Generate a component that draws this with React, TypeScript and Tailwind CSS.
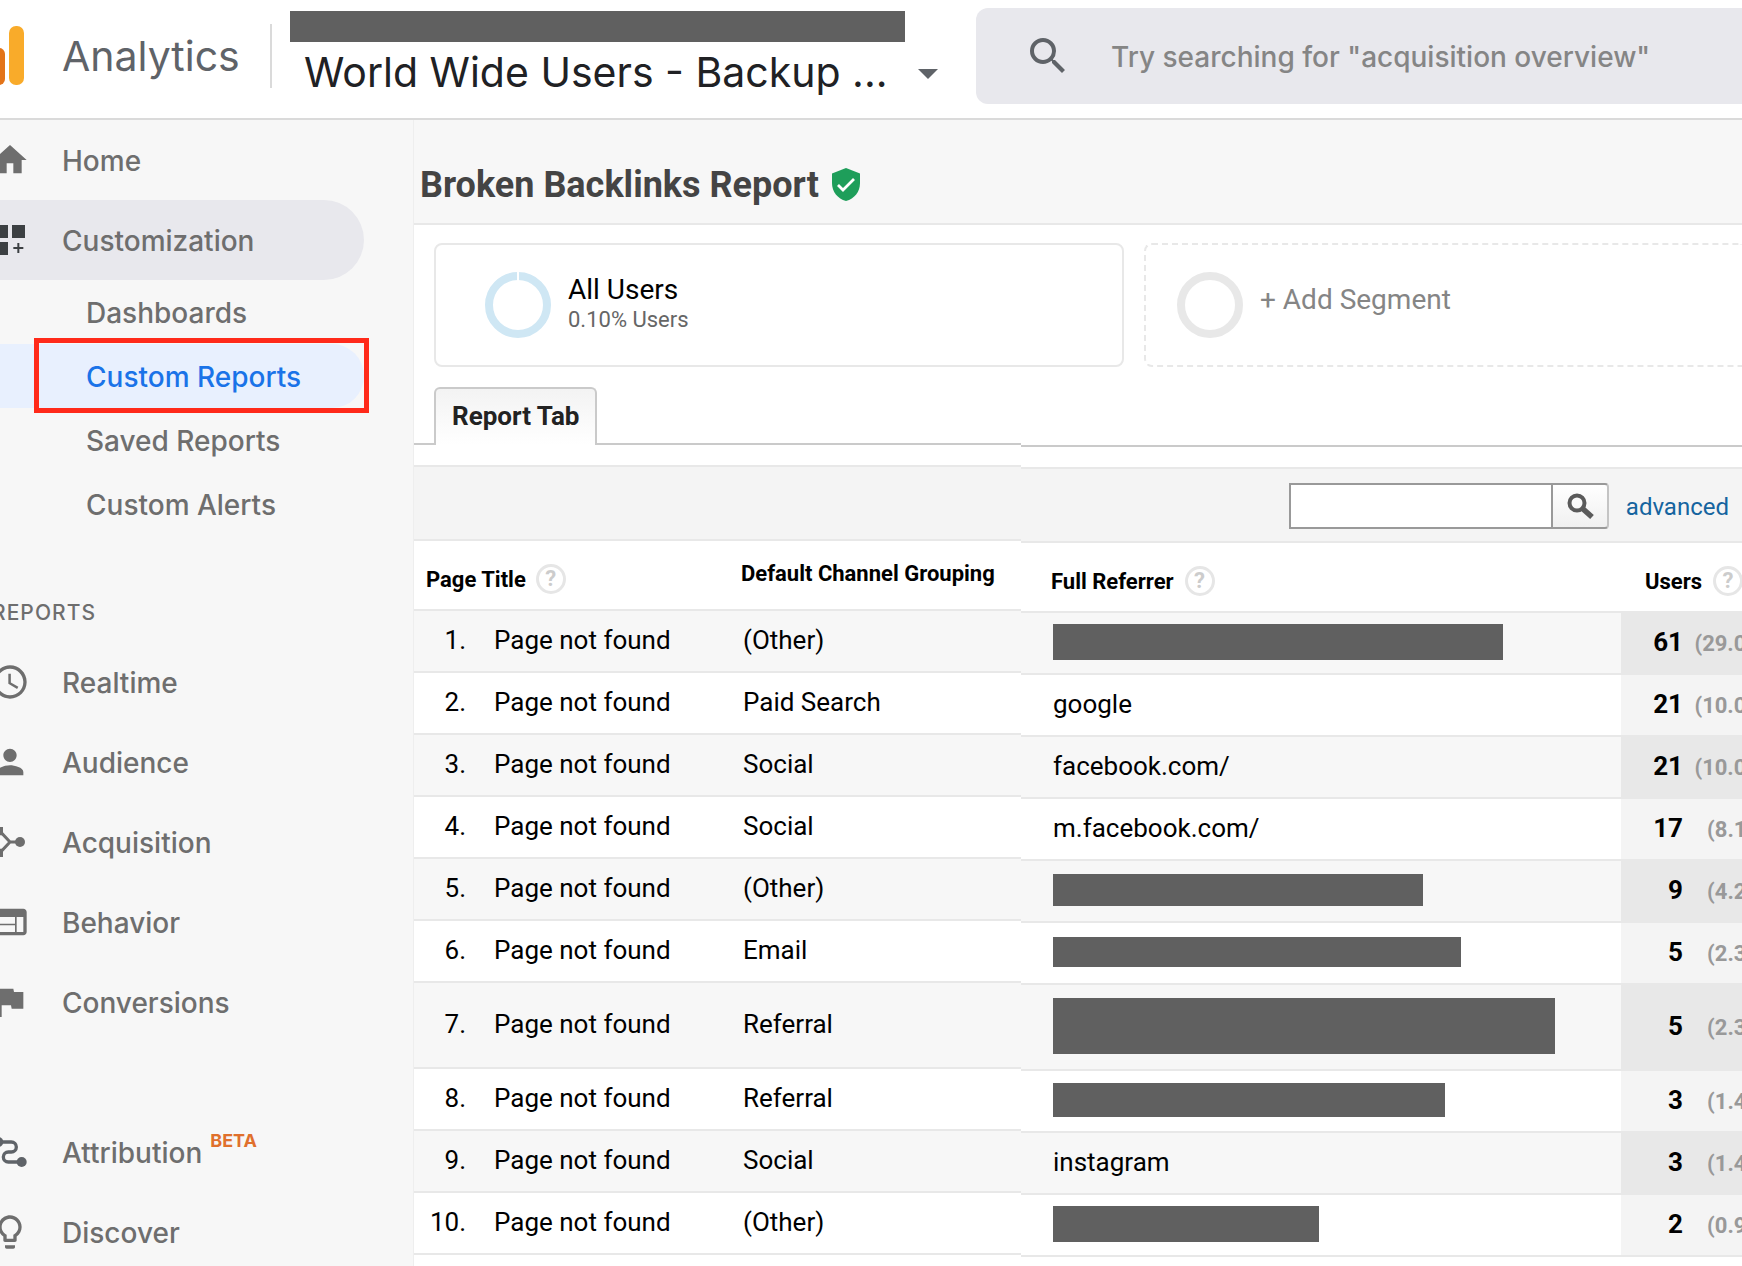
import type { ReactNode } from 'react'
import { MdFlag, MdHome, MdLightbulbOutline, MdPerson, MdSchedule, MdSearch, MdWeb } from 'react-icons/md'

type Row = {
  title: string
  channel: string
  referrer?: string
  mask?: string
  users: number
  share: string
  tall?: boolean
}

const rows: Row[] = [
  { title: 'Page not found', channel: '(Other)', mask: 'w-[450px] h-9', users: 61, share: '(29.05%)' },
  { title: 'Page not found', channel: 'Paid Search', referrer: 'google', users: 21, share: '(10.00%)' },
  { title: 'Page not found', channel: 'Social', referrer: 'facebook.com/', users: 21, share: '(10.00%)' },
  { title: 'Page not found', channel: 'Social', referrer: 'm.facebook.com/', users: 17, share: '(8.10%)' },
  { title: 'Page not found', channel: '(Other)', mask: 'w-[370px] h-8', users: 9, share: '(4.29%)' },
  { title: 'Page not found', channel: 'Email', mask: 'w-[408px] h-[30px]', users: 5, share: '(2.38%)' },
  { title: 'Page not found', channel: 'Referral', mask: 'w-[502px] h-14', users: 5, share: '(2.38%)', tall: true },
  { title: 'Page not found', channel: 'Referral', mask: 'w-[392px] h-[34px]', users: 3, share: '(1.43%)' },
  { title: 'Page not found', channel: 'Social', referrer: 'instagram', users: 3, share: '(1.43%)' },
  { title: 'Page not found', channel: '(Other)', mask: 'w-[266px] h-9', users: 2, share: '(0.95%)' },
]

const subItems = ['Dashboards', 'Custom Reports', 'Saved Reports', 'Custom Alerts']

function CustomizationIcon() {
  return (
    <svg viewBox="0 0 24 24" className="size-10 shrink-0 text-[#3c4043]" fill="currentColor" aria-hidden="true">
      <path d="M3 3h7.8v7.8H3zM13.2 3H21v7.8h-7.8zM3 13.2h7.8V21H3zM16.4 13.8h1.2v2.4H20v1.2h-2.4v2.4h-1.2v-2.4H14v-1.2h2.4z" />
    </svg>
  )
}

function AcquisitionIcon() {
  return (
    <svg viewBox="0 0 24 24" className="size-10 shrink-0" fill="currentColor" aria-hidden="true">
      <path d="M3 3h4.8v5H3zM3 16h4.8v5H3z" />
      <circle cx="18" cy="12" r="3" />
      <path d="M6 5.5l6 6.5-6 6.5M12 12h5" fill="none" stroke="currentColor" strokeWidth="1.8" />
    </svg>
  )
}

function AttributionIcon() {
  return (
    <svg viewBox="0 0 24 24" className="size-10 shrink-0 text-[#5f6368]" fill="currentColor" aria-hidden="true">
      <circle cx="5" cy="6" r="3" />
      <circle cx="19" cy="18" r="3" />
      <path d="M5 6h7.8a3 3 0 0 1 0 6H11a3 3 0 0 0 0 6h8" fill="none" stroke="currentColor" strokeWidth="2" />
    </svg>
  )
}

function ShieldIcon() {
  return (
    <svg viewBox="0 0 28 33" className="h-[33px] w-7 shrink-0" role="img" aria-label="Unsampled report">
      <path d="M14 0l14 5.500V15c0 9-5.500 15.500-14 18C5.500 30.500 0 24 0 15V5.500z" fill="#1e9e5a" />
      <path d="M6 17l5 5L22 11" fill="none" stroke="#fff" strokeWidth="2.8" />
    </svg>
  )
}

function HelpIcon() {
  return (
    <span className="flex size-[30px] shrink-0 items-center justify-center rounded-full border-[3px] border-[#e6e6e6] text-[22px] leading-none font-bold text-[#cccccc]">
      ?
    </span>
  )
}

function NavItem({ icon, label, children }: { icon: ReactNode; label: string; children?: ReactNode }) {
  return (
    <li>
      <a href="#" className="flex h-20 items-center">
        {icon}
        <span className="ml-8 pt-0.5">{label}</span>
        {children}
      </a>
    </li>
  )
}

function Sidebar() {
  return (
    <nav className="w-[413px] shrink-0 overflow-hidden font-[Inter,sans-serif] text-[28px] font-medium text-[#6e6e6e]">
      <ul className="-ml-2.5">
        <NavItem icon={<MdHome className="size-10 shrink-0" />} label="Home" />
        <li>
          <a href="#" className="mr-[49px] flex h-20 items-center rounded-r-full bg-[#e8e8ed]">
            <CustomizationIcon />
            <span className="ml-8 pt-0.5">Customization</span>
          </a>
          <ul>
            {subItems.map((item) =>
              item === 'Custom Reports' ? (
                <li key={item} className="relative">
                  <a
                    href="#"
                    aria-current="page"
                    className="mr-[49px] flex h-16 items-center rounded-r-full bg-[#e8f0fe] pt-0.5 pl-24 text-[#1a73e8]"
                  >
                    {item}
                  </a>
                  {/* Callout frame */}
                  <div className="pointer-events-none absolute -top-1.5 right-11 -bottom-[5px] left-11 border-[5px] border-[#ff2a1a]" />
                </li>
              ) : (
                <li key={item}>
                  <a href="#" className="flex h-16 items-center pt-0.5 pl-24">
                    {item}
                  </a>
                </li>
              ),
            )}
          </ul>
        </li>
      </ul>

      <h2 className="mt-[46px] -ml-2 flex h-[60px] items-center pt-0.5 text-[21px] tracking-wider">REPORTS</h2>
      <ul className="-ml-2.5">
        <NavItem icon={<MdSchedule className="size-10 shrink-0" />} label="Realtime" />
        <NavItem icon={<MdPerson className="size-10 shrink-0" />} label="Audience" />
        <NavItem icon={<AcquisitionIcon />} label="Acquisition" />
        <NavItem icon={<MdWeb className="size-10 shrink-0" />} label="Behavior" />
        <NavItem icon={<MdFlag className="size-10 shrink-0" />} label="Conversions" />
      </ul>
      <ul className="mt-[70px] -ml-2.5">
        <NavItem icon={<AttributionIcon />} label="Attribution">
          <span className="mb-6 ml-2 text-[18px] font-bold text-[#e0702d]">BETA</span>
        </NavItem>
        <NavItem icon={<MdLightbulbOutline className="size-10 shrink-0" />} label="Discover" />
      </ul>
    </nav>
  )
}

function Header() {
  return (
    <header className="flex h-[120px] shrink-0 items-center border-b-2 border-[#dadada] bg-white pb-1.5 font-[Inter,sans-serif]">
      <svg viewBox="0 0 24 60" className="h-[60px] w-6 shrink-0" aria-hidden="true">
        <rect x="-10" y="22" width="15" height="37" rx="6" fill="#e37419" />
        <rect x="9" y="0" width="15" height="59" rx="7" fill="#f9ab2a" />
      </svg>
      <span className="ml-[38px] w-[208px] shrink-0 pt-0.5 text-[41px] text-[#5f6368]">Analytics</span>
      <div className="h-16 w-0.5 shrink-0 bg-[#dadada]" />

      <button type="button" className="ml-[18px] flex shrink-0 items-center self-start pt-[11px] text-left">
        <span className="block w-[615px]">
          <span className="block h-[31px] bg-[#606060]" />
          <span className="block pt-0.5 pl-3.5 text-[41px] leading-14 whitespace-nowrap text-[#202124]">
            World Wide Users - Backup ...
          </span>
        </span>
        <svg viewBox="0 0 20 10" className="mt-9 ml-[13px] h-2.5 w-5" fill="#5f6368" aria-hidden="true">
          <path d="M0 0h20L10 10z" />
        </svg>
      </button>

      <label className="ml-[38px] flex h-24 min-w-0 flex-1 items-center rounded-l-xl bg-[#e8e8ed] pl-12">
        <MdSearch className="size-12 shrink-0 text-[#5f6368]" aria-hidden="true" />
        <input
          type="search"
          aria-label="Search"
          placeholder='Try searching for "acquisition overview"'
          className="ml-[39px] min-w-0 flex-1 bg-transparent pt-0.5 text-[28px] font-medium outline-none placeholder:text-[#858585]"
        />
      </label>
    </header>
  )
}

function Segments() {
  return (
    <div className="flex gap-5 pt-[18px] pl-5">
      <button
        type="button"
        className="flex h-[124px] w-[690px] shrink-0 items-center rounded-lg border-2 border-[#e8e8e8] pl-[49px] text-left"
      >
        <svg viewBox="0 0 66 66" className="size-[66px]" aria-hidden="true">
          <circle cx="33" cy="33" r="29" fill="none" stroke="#cfe7f4" strokeWidth="8" />
          <path d="M32 0h2v9h-2z" fill="#fff" />
        </svg>
        <span className="mb-0.5 ml-[17px] block">
          <span className="block text-[28px] leading-8 text-black">All Users</span>
          <span className="block text-[22px] leading-7 text-[#666666]">0.10% Users</span>
        </span>
      </button>
      <button
        type="button"
        className="flex h-[124px] min-w-0 flex-1 items-center rounded-l-lg border-2 border-r-0 border-dashed border-[#e8e8e8] pl-[31px]"
      >
        <span className="size-[66px] rounded-full border-8 border-[#e8e8e8]" />
        <span className="mb-2.5 ml-[17px] text-[28px] text-[#858585]">+ Add Segment</span>
      </button>
    </div>
  )
}

function DimensionPane() {
  return (
    <div className="w-[607px] shrink-0">
      <div className="flex pt-5" role="tablist">
        <div className="w-5 border-b-2 border-[#cacaca]" />
        <button
          type="button"
          role="tab"
          aria-selected="true"
          className="h-[58px] rounded-t-md border-2 border-b-0 border-[#cacaca] bg-linear-to-b from-[#f3f3f3] to-white px-4 pb-0.5 text-[26px] font-bold text-[#222222]"
        >
          Report Tab
        </button>
        <div className="flex-1 border-b-2 border-[#cacaca]" />
      </div>
      <div className="mt-5 h-[76px] border-y-2 border-[#e8e8e8] bg-[#f4f4f4]" />
      <table className="w-full table-fixed border-separate border-spacing-0 text-left">
        <colgroup>
          <col className="w-[52px]" />
          <col className="w-[275px]" />
          <col />
        </colgroup>
        <thead>
          <tr className="h-[70px] text-[22px]">
            <th colSpan={2} className="border-b-2 border-[#e8e8e8] pt-2 pl-3">
              <span className="flex items-center gap-2.5">
                Page Title <HelpIcon />
              </span>
            </th>
            <th className="border-b-2 border-[#e8e8e8] pb-1 whitespace-nowrap">Default Channel Grouping</th>
          </tr>
        </thead>
        <tbody className="text-[26px]">
          {rows.map((row, i) => (
            <tr key={i} className={`${row.tall ? 'h-[86px]' : 'h-[62px]'} odd:bg-[#f7f7f7]`}>
              <td className="border-b-2 border-[#e8e8e8] pb-0.5 text-right">{i + 1}.</td>
              <td className="border-b-2 border-[#e8e8e8] pb-0.5 pl-7">{row.title}</td>
              <td className="border-b-2 border-[#e8e8e8] pb-0.5 pl-0.5">{row.channel}</td>
            </tr>
          ))}
        </tbody>
      </table>
    </div>
  )
}

function MetricPane() {
  return (
    <div className="min-w-0 flex-1 overflow-hidden">
      <div className="h-20 border-b-2 border-[#cacaca]" />
      <form className="mt-5 flex h-[76px] items-center justify-end border-y-2 border-[#e8e8e8] bg-[#f4f4f4] pt-0.5 pr-[13px]">
        <input
          type="text"
          aria-label="Filter rows"
          className="h-[46px] w-[264px] border-2 border-[#999999] bg-white px-2 text-[24px] outline-none"
        />
        <button
          type="button"
          aria-label="Search"
          className="flex h-[46px] w-14 items-center justify-center rounded-r-sm border-y-2 border-r-2 border-[#999999] border-r-[#c4c4c4] bg-linear-to-b from-white to-[#f0f0f0]"
        >
          <svg viewBox="0 0 28 28" className="size-7" fill="none" stroke="#5a5a5a" aria-hidden="true">
            <circle cx="11" cy="11" r="7.500" strokeWidth="4" />
            <path d="M17 17l9 8" strokeWidth="5.500" />
          </svg>
        </button>
        <a href="#" className="ml-[17px] pt-0.5 text-[24px] text-[#15649f]">
          advanced
        </a>
      </form>
      <table className="w-full table-fixed border-separate border-spacing-0 text-left">
        <thead>
          <tr className="h-[70px] text-[22px]">
            <th className="border-b-2 border-[#e8e8e8] pt-2 pl-[30px]">
              <span className="flex items-center gap-[11px]">
                Full Referrer <HelpIcon />
              </span>
            </th>
            <th className="w-[121px] border-b-2 border-[#e8e8e8] pt-2 pl-6">
              <span className="flex items-center gap-[11px]">
                Users <HelpIcon />
              </span>
            </th>
          </tr>
        </thead>
        <tbody className="text-[26px]">
          {rows.map((row, i) => (
            <tr key={i} className={`${row.tall ? 'h-[86px]' : 'h-[62px]'} group odd:bg-[#f7f7f7]`}>
              <td className="border-b-2 border-[#e8e8e8] pb-0.5 pl-8">
                {row.mask ? <div className={`${row.mask} bg-[#606060]`} /> : row.referrer}
              </td>
              <td className="border-b-2 border-[#e8e8e8] bg-[#f4f4f4] pb-0.5 font-bold group-odd:bg-[#e8e8e8]">
                <span className="flex items-baseline text-right">
                  <span className="w-[62px] shrink-0">{row.users}</span>
                  <span className="w-[100px] shrink-0 text-[22px] text-[#999999]">{row.share}</span>
                </span>
              </td>
            </tr>
          ))}
        </tbody>
      </table>
    </div>
  )
}

export default function App() {
  return (
    <div className="flex h-screen flex-col overflow-hidden bg-[#f7f7f7] font-[Roboto,sans-serif] text-black">
      <Header />
      <div className="flex min-h-0 flex-1">
        <Sidebar />
        <main className="min-w-0 flex-1 border-l border-[#eeeeee] bg-white">
          <div className="flex h-[105px] items-center gap-[13px] border-b-2 border-[#e8e8e8] bg-[#f7f7f7] pt-[26px] pl-1.5">
            <h1 className="text-[36px] font-bold text-[#444444]">Broken Backlinks Report</h1>
            <ShieldIcon />
          </div>
          <Segments />
          <div className="flex">
            <DimensionPane />
            <MetricPane />
          </div>
        </main>
      </div>
    </div>
  )
}
